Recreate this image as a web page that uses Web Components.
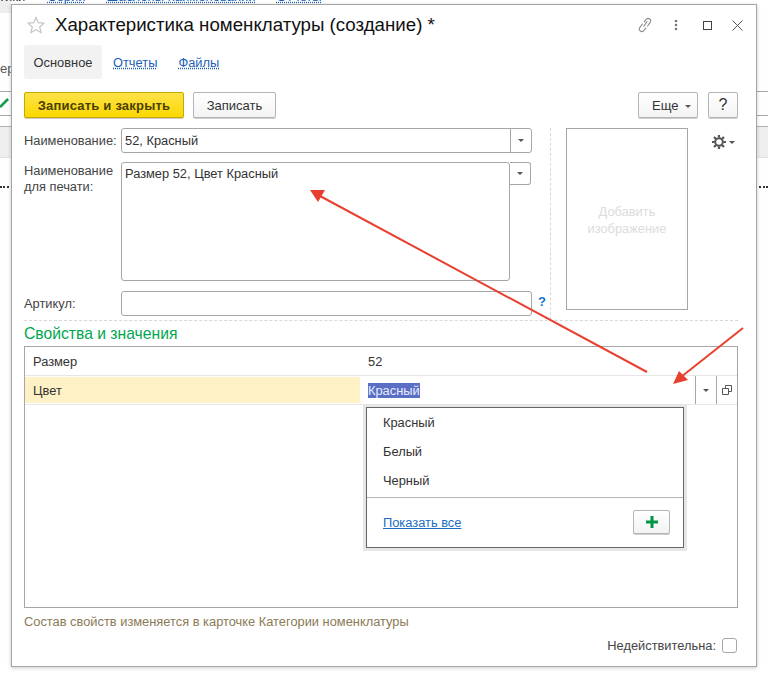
<!DOCTYPE html>
<html><head><meta charset="utf-8">
<style>
html,body{margin:0;padding:0;height:677px;overflow:hidden;background:#fff}
body{font:12.850px "Liberation Sans",Arial,sans-serif;color:#333}
</style></head><body>
<app-backdrop>
<form-window>
  <title-bar></title-bar>
  <tab-strip></tab-strip>
  <cmd-bar></cmd-bar>
  <form-fields></form-fields>
  <props-section></props-section>
  <form-foot></form-foot>
</form-window>
</app-backdrop>
<script>
function def(name,css,html){customElements.define(name,class extends HTMLElement{constructor(){super();this.attachShadow({mode:'open'}).innerHTML='<style>'+css+'</style>'+html;}});}
def('app-backdrop',`:host{display:block;position:relative;width:768px;height:677px;overflow:hidden;background:#fff}
.top{height:13px;background:linear-gradient(90deg,#eee 0,#eee 11px,#fff 11px);font-size:13px;line-height:16px;white-space:nowrap;display:flex;overflow:hidden}
.top div{display:flex;margin-top:-11px;height:16px}
.top a{color:#1a5fb4;text-decoration:underline dotted}
.er{height:78px;box-sizing:border-box;padding-top:48px;font-size:13px;line-height:16px;color:#555}
.row{height:25px;box-sizing:border-box;border-top:1px solid #aaa;border-bottom:1px solid #aaa}
.row svg{display:block;margin-top:3px}
.hdr{margin-top:10px;height:32px;box-sizing:border-box;background:#efefef;border-top:1px solid #b0b0b0;border-bottom:1px solid #e0e0e0}
.d{height:30px;box-sizing:border-box;border-bottom:2px dotted #333}
.win{position:absolute;left:11px;top:4px;width:746px;height:663px}
.arrows{position:absolute;left:0;top:0;pointer-events:none;display:block}`,
`<div class="top"><div><span style="margin-left:-1px">тики</span><a style="margin-left:22px">Серии</a><a style="margin-left:21px">Шаблоны наименований</a><a style="margin-left:21px">Отчеты</a></div></div>
<div class="er">ер</div><div class="row"><svg width="11" height="16"><path d="M0 12L8 4" fill="none" stroke="#1a9b4c" stroke-width="2.600"/></svg></div>
<div class="hdr"></div><div class="d"></div>
<div class="win"><slot></slot></div>
<svg class="arrows" width="768" height="677">
<g fill="#e8402f" stroke="none">
<path d="M310 190 L325 190 L318 202Z"/>
<path d="M673 384 L679 371 L688 380Z"/>
</g>
<g fill="none" stroke="#e8402f" stroke-width="2"><path d="M681 377 L743 328"/><path d="M320 196 L647 372"/></g>
</svg>`);
def('form-window',`:host{display:flex;flex-direction:column;box-sizing:border-box;width:746px;height:663px;background:#fff;border:1px solid #a6a6a6;box-shadow:0 1px 4px rgba(0,0,0,.2);padding:0 18px 0 12px}`,`<slot></slot>`);
def('title-bar',`:host{display:flex;align-items:center;height:40px;flex:none}
.star{margin:0 10px 0 3px;flex:none;display:block}
h1{margin:0;font:400 18.700px "Liberation Sans",Arial,sans-serif;color:#111;white-space:nowrap}
.sp{flex:1}
.ic{display:flex;margin-right:-5px;align-items:center}
.ic svg{display:block}`,
`<svg class="star" width="18" height="18" viewBox="0 0 18 18"><path d="M9 1.500l2.300 5.200 5.600.5-4.200 3.800 1.300 5.500L9 13.600 4 16.500l1.300-5.500L1 7.200l5.700-.5z" fill="#fff" stroke="#c4c4c4" stroke-width="1.200"/></svg>
<h1>Характеристика номенклатуры (создание) *</h1><span class="sp"></span>
<div class="ic">
<svg width="16" height="16" viewBox="0 0 16 16" style="margin-right:21px"><g fill="none" stroke="#8a8a8a" stroke-width="1.100" stroke-linecap="round"><path d="M6.800 9.200L10 4.600M7.200 4.800L9.400 2.200a2.500 2.500 0 0 1 4 2.900L10.600 9"/><path d="M8.800 11.200L6.600 13.800a2.500 2.500 0 0 1-4-2.900L5.400 7"/></g></svg>
<svg width="4" height="12" viewBox="0 0 4 12" style="margin-right:25px"><g fill="#777"><circle cx="2" cy="2" r="1.300"/><circle cx="2" cy="6" r="1.300"/><circle cx="2" cy="10" r="1.300"/></g></svg>
<svg width="9" height="9" viewBox="0 0 9 9" style="margin-right:20px"><rect x=".5" y=".5" width="8" height="8" fill="none" stroke="#444"/></svg>
<svg width="11" height="11" viewBox="0 0 11 11"><path d="M.5.5l10 10M10.500.5l-10 10" stroke="#555" fill="none"/></svg>
</div>`);
def('tab-strip',`:host{display:flex;align-items:center;height:34px;flex:none}
.on{background:#f2f2f2;border-radius:3px;height:34px;width:78px;display:flex;align-items:center;justify-content:center;color:#333}
a{color:#1a5fb4;text-decoration:underline dotted;margin-left:11px}
a+a{margin-left:21px}`,`<div class="on">Основное</div><a>Отчеты</a><a>Файлы</a>`);
def('cmd-bar',`:host{display:flex;align-items:center;height:26px;margin-top:13px;flex:none}
button{font:13px "Liberation Sans",Arial,sans-serif;height:26px;box-sizing:border-box;border:1px solid #b5b5b5;border-radius:2px;background:linear-gradient(#fff,#f3f3f3);color:#333;padding:0;box-shadow:0 1px 0 #ccc}
.p{width:160px;font-weight:700;background:linear-gradient(#fde24a,#fbd800);border-color:#c9a800;color:#4a4000;margin-right:9px;letter-spacing:.2px}
.s{width:83px}.sp{flex:1}
.m{width:60px;margin-right:10px;text-align:left;padding-left:13px}
.q{width:30px;font-size:16px}
.m i{display:inline-block;border:3px solid transparent;border-top:3px solid #555;border-bottom:0;margin-left:7px;vertical-align:2px}`,
`<button class="p">Записать и закрыть</button><button class="s">Записать</button><span class="sp"></span><button class="m">Еще<i></i></button><button class="q">?</button>`);
def('form-fields',`:host{display:flex;flex:none;margin-top:10px;height:193px;box-sizing:border-box;border-bottom:1px dashed #d8d8d8}
.left{width:526px;flex:none;box-sizing:border-box;display:flex;flex-direction:column;gap:9px}
.rw{display:flex}
.l{width:97px;flex:none;color:#444;line-height:16px;padding-top:5px;box-sizing:border-box;white-space:nowrap}
.f{box-sizing:border-box;border:1px solid #a6a6a6;border-radius:3px;display:flex;height:25px;width:411px;background:#fff;padding-left:3px;align-items:center;flex:none}
.f span{flex:1}.f b{width:21px;height:100%;border-left:1px solid #a6a6a6;display:flex;align-items:center;justify-content:center;box-sizing:border-box}
i.t{display:block;border:3px solid transparent;border-top:3px solid #555;border-bottom:0}
.ta{box-sizing:border-box;border:1px solid #a6a6a6;border-radius:3px;height:119px;padding:3px;width:389px;flex:none}
.mini{box-sizing:border-box;width:21px;height:23px;border:1px solid #a6a6a6;border-left:0;border-radius:0 3px 3px 0;display:flex;align-items:center;justify-content:center}
.q{color:#1276c8;font-weight:700;font-size:13px;margin:3px 0 0 6px}
.sep{flex:none;border-left:1px dashed #d8d8d8;height:192px}
.pic{flex:none;margin-left:15px;width:122px;height:182px;box-sizing:border-box;border:1px solid #a6a6a6;padding-top:2px;display:flex;align-items:center;justify-content:center;text-align:center;color:#dcdcdc;line-height:17px}
.gear{flex:none;margin:7px 0 0 24px;display:flex;align-items:center;gap:3px;height:14px}
.gear svg{display:block}
`,
`<div class="left">
<div class="rw"><div class="l">Наименование:</div><div class="f"><span>52, Красный</span><b><i class="t"></i></b></div></div>
<div class="rw"><div class="l" style="padding-top:1px">Наименование<br>для печати:</div><div class="ta">Размер 52, Цвет Красный</div><div class="mini"><i class="t"></i></div></div>
<div class="rw" style="margin-top:1px"><div class="l">Артикул:</div><div class="f"></div><div class="q">?</div></div>
</div>
<div class="sep"></div><div class="pic">Добавить<br>изображение</div>
<div class="gear"><svg width="14" height="14" viewBox="0 0 14 14"><circle cx="7" cy="7" r="3.800" fill="none" stroke="#555" stroke-width="2"/><g stroke="#555" stroke-width="2.200"><path d="M7 0v2.500M7 11.500V14M0 7h2.500M11.500 7H14M2 2l1.800 1.800M10.200 10.200L12 12M12 2l-1.800 1.800M3.800 10.200L2 12"/></g></svg><i class="t"></i></div>`);
def('props-section',`:host{display:block;flex:none}
h2{margin:0;font:400 15.700px "Liberation Sans",Arial,sans-serif;color:#00a650;height:25px;line-height:25px}
.box{box-sizing:border-box;border:1px solid #a6a6a6;height:262px;width:714px;position:relative}
.r{display:flex;height:29px;box-sizing:border-box;border-bottom:1px solid #e6e6e6;align-items:center}
.a{width:335px;padding-left:8px;box-sizing:border-box;height:100%;display:flex;align-items:center}
.v{flex:1;padding-left:8px;display:flex;align-items:center;height:100%}
.sel .a{background:#fdf1c5;height:26px}
mark{background:#5a6fc4;color:#e8ecff;line-height:15px}
.btn{width:21px;height:100%;border-left:1px solid #a6a6a6;box-sizing:border-box;display:flex;align-items:center;justify-content:center}
.btn svg{display:block}
i.t{display:block;border:3px solid transparent;border-top:3px solid #555;border-bottom:0}
.pop{position:absolute;left:341px;top:60px;width:318px;height:141px;box-sizing:border-box;background:#fff;border:1px solid #666;box-shadow:0 0 0 3px #e6e6e6}
.it{height:29px;line-height:29px;padding-left:16px;color:#333}
.hr{border-top:1px solid #b5b5b5;margin-top:2px}
.bt{display:flex;justify-content:space-between;align-items:center;padding:12px 13px 0 16px}
a{color:#1a6cc4;text-decoration:underline}
.add{width:37px;height:24px;box-sizing:border-box;border:1px solid #b5b5b5;border-radius:2px;background:linear-gradient(#fff,#f3f3f3);display:flex;align-items:center;justify-content:center;box-shadow:0 1px 0 #ccc}`,
`<h2>Свойства и значения</h2>
<div class="box">
<div class="r"><div class="a">Размер</div><div class="v">52</div></div>
<div class="r sel"><div class="a">Цвет</div><div class="v"><mark>Красный</mark></div><div class="btn"><i class="t"></i></div><div class="btn"><svg width="10" height="10" viewBox="0 0 10 10"><path d="M3.500 3.500V.5h6v6h-3M.5 3.500h6v6h-6z" fill="none" stroke="#555"/></svg></div></div>
<div class="pop"><div class="it">Красный</div><div class="it">Белый</div><div class="it">Черный</div><div class="hr"></div>
<div class="bt"><a>Показать все</a><div class="add"><svg width="12" height="12" viewBox="0 0 12 12"><path d="M4.500 0h3v4.500H12v3H7.500V12h-3V7.500H0v-3h4.500z" fill="#009646"/></svg></div></div></div>
</div>`);
def('form-foot',`:host{display:block;flex:none}
.n{color:#8a7a55;margin-top:6px;height:16px;line-height:16px}
.c{display:flex;justify-content:flex-end;align-items:center;margin-top:8px;gap:6px;color:#444}
.c i{display:block;width:13px;height:13px;border:1px solid #a6a6a6;border-radius:3px;margin-right:1px}`,
`<div class="n">Состав свойств изменяется в карточке Категории номенклатуры</div><div class="c">Недействительна:<i></i></div>`);
</script></body></html>
